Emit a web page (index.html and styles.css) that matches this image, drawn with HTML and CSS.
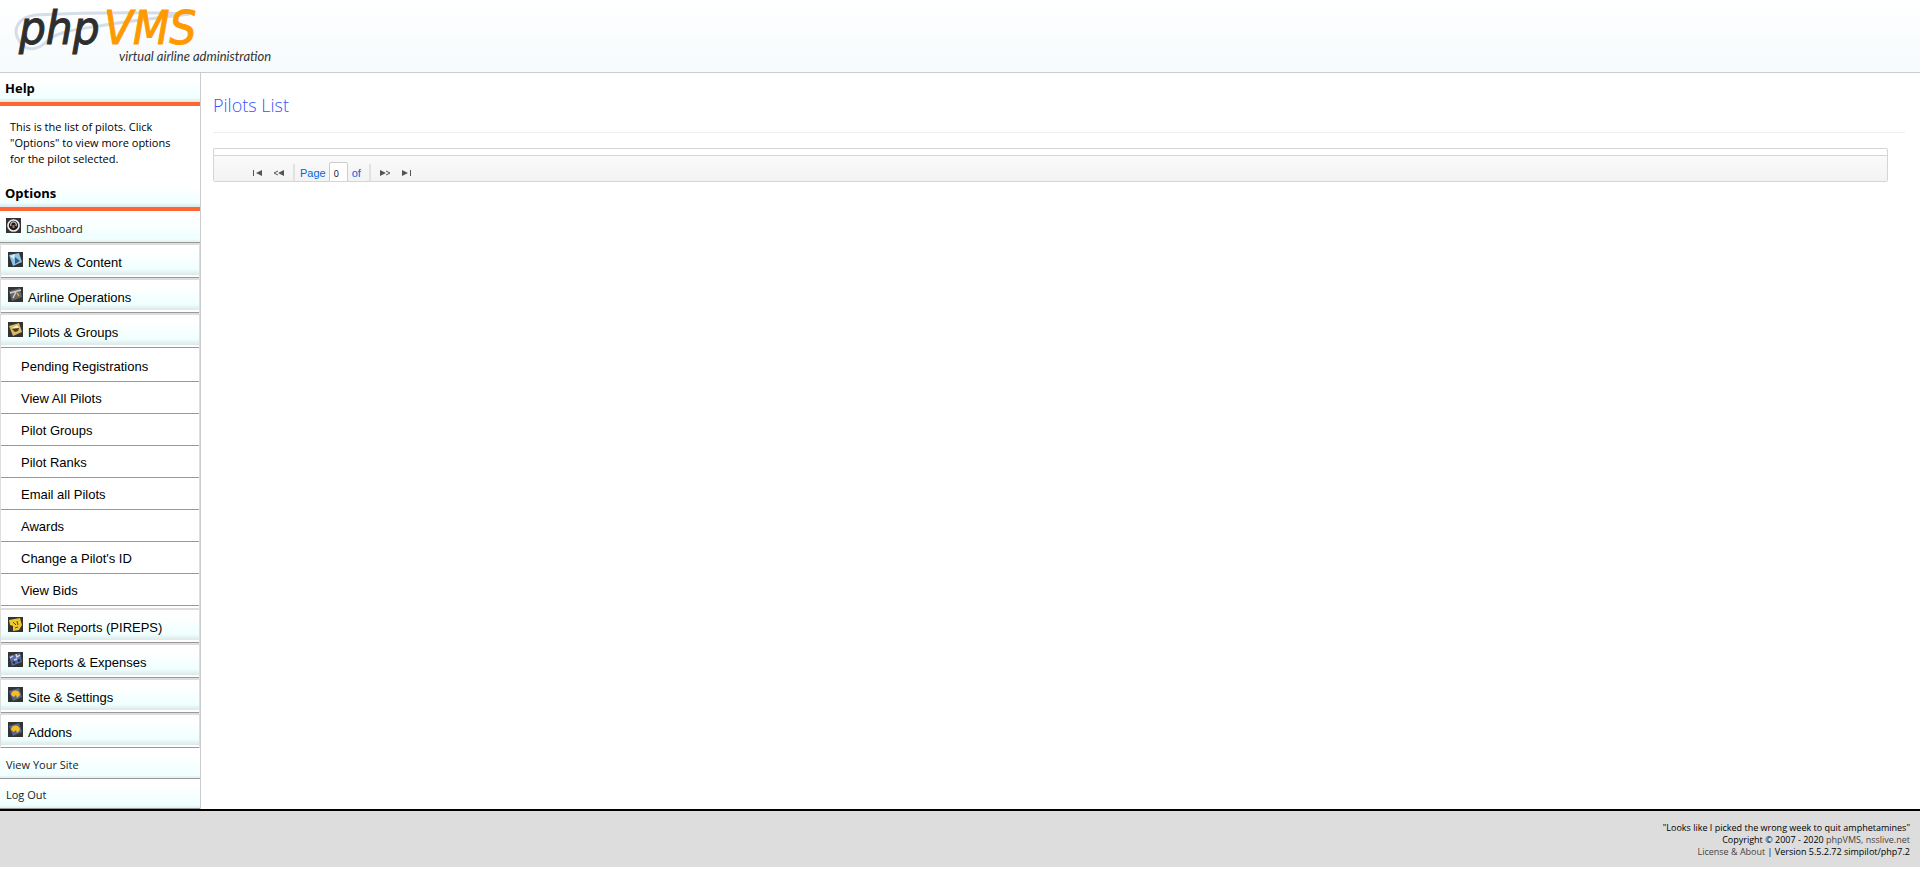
FILE: index.html
```html
<!DOCTYPE html>
<html lang="en">
<head>
    <meta charset="UTF-8">
    <meta name="viewport" content="width=device-width, initial-scale=1.0">
    <title>phpVMS Admin</title>
    <link rel="stylesheet" href="styles.css">
</head>
<body>
    <header id="head">
        <svg class="logo" width="290" height="72" viewBox="0 0 290 72" role="img" aria-label="phpVMS virtual airline administration">
            <path class="swoosh" d="M190 14 C140 12 80 13 36 15 C18 17 11 30 20 42 C26 52 38 50 46 42 C56 31 80 29 105 25 C130 21 165 17 190 14"/>
            <text class="logo-php" x="19" y="44">php</text>
            <text class="logo-vms" x="104" y="44">VMS</text>
            <text class="logo-tag" x="119" y="61">virtual airline administration</text>
        </svg>
    </header>

    <div id="wrapper">
        <aside id="sidebar">
            <h3>Help</h3>
            <p class="help">This is the list of pilots. Click "Options" to view more options for the pilot selected.</p>
            <h3 class="options">Options</h3>

            <nav>
                <a class="plain dashboard" href="#">
                    <svg class="icon" width="15" height="15" viewBox="0 0 15 15">
                        <rect width="15" height="15" fill="#333"/>
                        <circle cx="7.5" cy="7.5" r="5.5" fill="#1c1c1c" stroke="#eee" stroke-width="1.6"/>
                        <path d="M5 8 A2.8 2.8 0 1 1 10 8" fill="none" stroke="#ccc" stroke-width="1.2"/>
                        <rect x="6.5" y="7" width="2" height="3" fill="#c66"/>
                    </svg>
                    Dashboard
                </a>

                <div class="accordion">
                    <button type="button" class="menu-head">
                        <svg class="icon" width="15" height="15" viewBox="0 0 15 15">
                            <rect width="15" height="15" fill="#333"/>
                            <path d="M1 3 L11 1 L14 10 L5 14 Z" fill="#8fc4ea"/>
                            <path d="M2 4 L7 2 L6 7 Z" fill="#d9edf9"/>
                            <path d="M7 5 L12 9 L7 12 Z" fill="#3c5a78"/>
                        </svg>
                        News &amp; Content
                    </button>
                    <button type="button" class="menu-head">
                        <svg class="icon" width="15" height="15" viewBox="0 0 15 15">
                            <rect width="15" height="15" fill="#333"/>
                            <path d="M1 4 L12 1 L14 10 L4 14 Z" fill="#666"/>
                            <path d="M2 6 L13 3 M8 5 L5 11" stroke="#ccc" stroke-width="1.5"/>
                            <path d="M9 6 L11 9" stroke="#d8a640" stroke-width="1.5"/>
                        </svg>
                        Airline Operations
                    </button>
                    <button type="button" class="menu-head">
                        <svg class="icon" width="15" height="15" viewBox="0 0 15 15">
                            <rect width="15" height="15" fill="#333"/>
                            <path d="M1 4 L11 1 L14 10 L5 14 Z" fill="#d9b968"/>
                            <path d="M4 6 L9 3 L11 6 Z" fill="#f5ead0"/>
                            <path d="M4 7 L11 6 L10 9 L7 10 Z" fill="#443c28"/>
                        </svg>
                        Pilots &amp; Groups
                    </button>
                    <ul class="submenu">
                        <li><a href="#">Pending Registrations</a></li>
                        <li><a href="#">View All Pilots</a></li>
                        <li><a href="#">Pilot Groups</a></li>
                        <li><a href="#">Pilot Ranks</a></li>
                        <li><a href="#">Email all Pilots</a></li>
                        <li><a href="#">Awards</a></li>
                        <li><a href="#">Change a Pilot's ID</a></li>
                        <li><a href="#">View Bids</a></li>
                    </ul>
                    <button type="button" class="menu-head">
                        <svg class="icon" width="15" height="15" viewBox="0 0 15 15">
                            <rect width="15" height="15" fill="#333"/>
                            <path d="M1 3 L12 1 L14 8 L11 13 L5 14 L5 9 L2 8 Z" fill="#ecc72e"/>
                            <path d="M5 5 L8 8 M9 4 L10 8 M7 11 L10 10" stroke="#5a4a10"/>
                        </svg>
                        Pilot Reports (PIREPS)
                    </button>
                    <button type="button" class="menu-head">
                        <svg class="icon" width="15" height="15" viewBox="0 0 15 15">
                            <rect width="15" height="15" fill="#333"/>
                            <path d="M1 4 L12 1 L14 10 L4 14 Z" fill="#566ca2"/>
                            <path d="M2 6 L5 4 M8 2 L9 5 L12 3 M6 8 L9 7" fill="none" stroke="#cdd6ea" stroke-width="1.5"/>
                            <path d="M5 11 L7 10 M10 9 L12 8" stroke="#1e2740" stroke-width="2"/>
                        </svg>
                        Reports &amp; Expenses
                    </button>
                    <button type="button" class="menu-head">
                        <svg class="icon" width="15" height="15" viewBox="0 0 15 15">
                            <rect width="15" height="15" fill="#333"/>
                            <path d="M1 4 L11 1 L14 10 L5 14 Z" fill="#56668a"/>
                            <path d="M3 8 A4 4 0 1 1 12 8 L9 11 L8 8 L6 10 Z" fill="#f7bd1c"/>
                        </svg>
                        Site &amp; Settings
                    </button>
                    <button type="button" class="menu-head">
                        <svg class="icon" width="15" height="15" viewBox="0 0 15 15">
                            <rect width="15" height="15" fill="#333"/>
                            <path d="M1 4 L11 1 L14 10 L5 14 Z" fill="#56668a"/>
                            <path d="M3 8 A4 4 0 1 1 12 8 L9 11 L8 8 L6 10 Z" fill="#f7bd1c"/>
                        </svg>
                        Addons
                    </button>
                </div>

                <a class="plain" href="#">View Your Site</a>
                <a class="plain" href="#">Log Out</a>
            </nav>
        </aside>

        <main id="content">
            <h1>Pilots List</h1>
            <div class="grid">
                <div class="grid-head"></div>
                <div class="pager">
                    <button type="button" class="first" aria-label="First page">
                        <svg width="10" height="6" viewBox="0 0 10 6"><path d="M0 0h1v6h-1z M9 0v6L3 3z"/></svg>
                    </button>
                    <button type="button" class="prev" aria-label="Previous page">
                        <svg width="12" height="6" viewBox="0 0 12 6"><path d="M11 0v6L5 3z"/><path class="line" d="M5 1L1 3l4 2"/></svg>
                    </button>
                    <span class="sep"></span>
                    <label for="page">Page</label>
                    <input type="text" id="page" value="0">
                    <span>of</span>
                    <span class="sep"></span>
                    <button type="button" class="next" aria-label="Next page">
                        <svg width="12" height="6" viewBox="0 0 12 6"><path d="M1 0v6L7 3z"/><path class="line" d="M7 1l4 2L7 5"/></svg>
                    </button>
                    <button type="button" class="last" aria-label="Last page">
                        <svg width="10" height="6" viewBox="0 0 10 6"><path d="M8 0h1v6h-1z M0 0v6L6 3z"/></svg>
                    </button>
                </div>
            </div>
        </main>
    </div>

    <footer id="footer">
        "Looks like I picked the wrong week to quit amphetamines"<br>
        Copyright © 2007 - 2020 <a href="#">phpVMS, nsslive.net</a><br>
        <a href="#">License &amp; About</a> | Version 5.5.2.72 simpilot/php7.2
    </footer>
</body>
</html>
```
FILE: styles.css
```css
* {
    box-sizing: border-box;
}
body {
    margin: 0;
    background-color: #ffffff;
    color: #000000;
    font-family: 'Segoe UI', 'Open Sans', sans-serif;
    font-size: 12px;
}
a {
    color: inherit;
    text-decoration: none;
}
button {
    font-family: inherit;
    cursor: pointer;
}

/* header */
#head {
    height: 73px;
    border-bottom: 1px solid #cccccc;
    background: linear-gradient(#ffffff, #f5fafc);
}
.logo {
    display: block;
}
.swoosh {
    fill: none;
    stroke: #d5dde6;
    stroke-width: 3;
}
.logo-php,
.logo-vms {
    font-family: 'DejaVu Sans Condensed', 'DejaVu Sans', sans-serif;
    font-size: 47px;
    font-style: italic;
    font-stretch: condensed;
}
.logo-php {
    fill: #2e2e2e;
    stroke: #2e2e2e;
}
.logo-vms {
    fill: #ff9900;
    stroke: #ff9900;
}
.logo-tag {
    font-family: Lato, sans-serif;
    font-size: 13px;
    font-style: italic;
    fill: #333333;
}

/* sidebar */
#wrapper {
    display: flex;
}
#sidebar {
    width: 201px;
    flex-shrink: 0;
    border-right: 1px solid #cccccc;
}
#sidebar h3 {
    margin: 0;
    height: 33px;
    padding: 0 5px;
    border-bottom: 4px solid #ff6633;
    background: linear-gradient(#ffffff 30%, #f0ffff 85%, #dde8e8);
    font-size: 13px;
    line-height: 31px;
}
#sidebar .help {
    margin: 0;
    padding: 13px 20px 10px 10px;
    font-size: 11px;
    line-height: 16px;
}
#sidebar .options {
    height: 34px;
    line-height: 33px;
}
.plain {
    display: block;
    height: 30px;
    padding: 0 6px;
    border-bottom: 1px solid #999999;
    background: linear-gradient(#ffffff 20%, #f0ffff 90%, #e4eeee);
    color: #222222;
    font-size: 11px;
    line-height: 32px;
}
.dashboard {
    display: flex;
    gap: 5px;
    height: 32px;
    line-height: 35px;
}
.icon {
    flex-shrink: 0;
    margin-top: 7px;
}
.accordion {
    margin-bottom: 1px;
    border-left: 1px solid #dddddd;
    border-right: 1px solid #dddddd;
    font-family: Arial, 'Liberation Sans', sans-serif;
    font-size: 13px;
}
.menu-head {
    display: flex;
    gap: 5px;
    width: 100%;
    height: 35px;
    padding: 0 7px;
    border: none;
    border-top: 2px solid #dddddd;
    border-bottom: 1px solid #999999;
    background: linear-gradient(#ffffff 20%, #f0ffff 75%, #dce6e6 95%, #ffffff 95%);
    font-size: 13px;
    line-height: 35px;
}
.submenu {
    margin: 0;
    padding: 2px 0;
    list-style: none;
}
.submenu a {
    display: block;
    height: 32px;
    padding-left: 20px;
    border-bottom: 1px solid #999999;
    line-height: 33px;
}

/* content */
#content {
    flex: 1;
    padding: 0 15px 0 12px;
}
#content h1 {
    margin: 0 0 15px;
    height: 60px;
    border-bottom: 1px solid #eeeeee;
    color: #3355ff;
    font-size: 18px;
    font-weight: 300;
    line-height: 65px;
}
.grid {
    width: 99%;
    border: 1px solid #d5d5d5;
    border-radius: 2px;
}
.grid-head {
    height: 6px;
}
.pager {
    display: flex;
    height: 26px;
    padding: 6px 0 0 39px;
    overflow: hidden;
    border-top: 1px solid #d5d5d5;
    background: linear-gradient(#fafafa, #f3f3f3);
    color: #0066dd;
    font-family: Arial, 'Liberation Sans', sans-serif;
    font-size: 11px;
    line-height: 22px;
}
.pager button {
    display: flex;
    align-items: center;
    height: 22px;
    padding: 0;
    border: none;
    background: none;
    fill: #555555;
}
.pager .line {
    fill: none;
    stroke: #555555;
}
.first {
    margin-right: 10px;
}
.next {
    margin-right: 11px;
}
.sep {
    width: 2px;
    height: 20px;
    margin: 2px 8px 0;
    background-color: #e2e2e2;
}
.sep + label {
    margin-left: -3px;
}
#page {
    width: 19px;
    height: 22px;
    margin: 0 4px 0 3px;
    padding: 0 4px;
    border: 1px solid #cccccc;
    border-radius: 2px;
    background-color: #ffffff;
    font-family: 'Segoe UI', 'Open Sans', sans-serif;
    font-size: 9px;
}

/* footer */
#footer {
    height: 58px;
    padding: 11px 10px 0;
    border-top: 2px solid #000000;
    background-color: #dddddd;
    font-size: 9px;
    line-height: 12px;
    text-align: right;
}
#footer a {
    color: #444444;
}
```
